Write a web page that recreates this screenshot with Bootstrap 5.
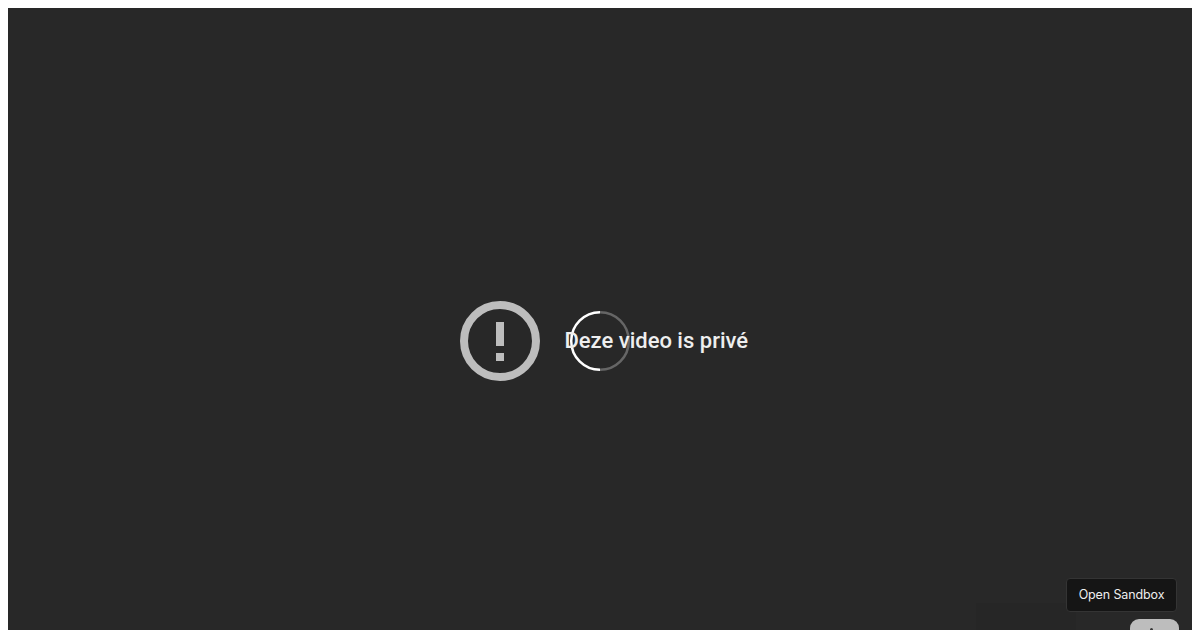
<!DOCTYPE html>
<html lang="nl">
<head>
<meta charset="utf-8">
<title>Deze video is privé</title>
<link href="https://cdn.jsdelivr.net/npm/bootstrap@5.3.0/dist/css/bootstrap.min.css" rel="stylesheet">
<style>
html, body { height: 630px; overflow: hidden; }
body { margin: 0; padding: 8px 8px 0; background: #fff; }
.player-frame { height: 622px; width: 1184px; padding: 44px 0 0 8px; background: #282828; }
.err-text { position: relative; z-index: 2; font-family: Roboto, sans-serif; font-weight: 500; font-size: 22px; line-height: 28px; color: #eee; margin: 0 0 0 24.5px; }
.err-icon { width: 80px; height: 80px; }
.load-ring { position: absolute; left: 560px; top: 301px; width: 64px; height: 64px; }
.sandbox-tip { position: absolute; left: 1058px; top: 570px; width: 111px; height: 34px; background: #151515; border: 1px solid #343434; border-radius: 4px; color: #eee; font-family: Inter, sans-serif; font-size: 12.5px; letter-spacing: -.12px; }
.sandbox-fade { position: absolute; left: 968px; top: 595px; width: 100px; height: 40px; background: #262626; }
.sandbox-bump { position: absolute; left: 1121.5px; top: 611px; width: 49.500px; height: 40px; background: #bdbdbd; border-radius: 9px; }
.sandbox-mark { position: absolute; left: 20px; top: 9px; width: 3px; height: 3px; background: #3a3a3a; border-radius: 50% 50% 0 0; }
</style>
</head>
<body>
<div class="player-frame position-relative d-flex align-items-center justify-content-center overflow-hidden">
  <div class="d-flex align-items-center">
    <svg class="err-icon flex-shrink-0" viewBox="0 0 80 80" aria-hidden="true">
      <circle cx="40" cy="40" r="36" fill="none" stroke="#bdbdbd" stroke-width="8"/>
      <rect x="36" y="21" width="8" height="24" fill="#bdbdbd"/>
      <rect x="36" y="52" width="8" height="8" fill="#bdbdbd"/>
    </svg>
    <p class="err-text">Deze video is privé</p>
  </div>
  <svg class="load-ring" viewBox="0 0 64 64" aria-hidden="true">
    <path d="M32 3.2a28.800 28.800 0 0 1 0 57.600" fill="none" stroke="#666" stroke-width="2.5"/>
    <path d="M32 60.800a28.800 28.800 0 0 1 0-57.600" fill="none" stroke="#fff" stroke-width="2.5"/>
  </svg>
  <div class="sandbox-fade"></div>
  <div class="sandbox-tip d-flex align-items-center justify-content-center">Open Sandbox</div>
  <div class="sandbox-bump"><span class="sandbox-mark d-block"></span></div>
</div>
<script src="https://cdn.jsdelivr.net/npm/bootstrap@5.3.0/dist/js/bootstrap.bundle.min.js"></script>
</body>
</html>
